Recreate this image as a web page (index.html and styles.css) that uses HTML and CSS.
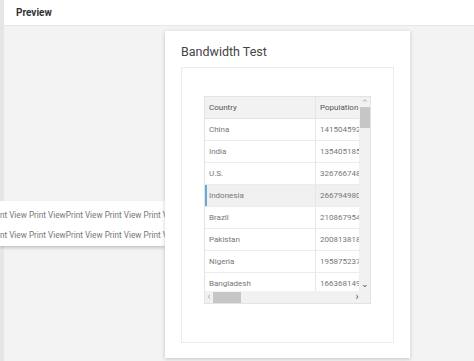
FILE: index.html
```html
<!DOCTYPE html>
<html lang="en">
<head>
    <meta charset="UTF-8">
    <meta name="viewport" content="width=device-width, initial-scale=1.0">
    <title>Preview</title>
    <link rel="stylesheet" href="styles.css">
</head>
<body>
    <div class="page">
        <div class="header">Preview</div>
        <div class="stage">
            <div class="print-strip">
                <div class="print-line">Print View Print ViewPrint View Print View Print View</div>
                <div class="print-line">Print View Print ViewPrint View Print View Print View</div>
            </div>
            <div class="card">
                <div class="card-title">Bandwidth Test</div>
                <div class="card-body">
                    <div class="grid">
                        <div class="grid-main">
                            <div class="grid-view">
                                <div class="row head">
                                    <div class="cell country">Country</div>
                                    <div class="cell pop">Population</div>
                                </div>
                                <div class="row"><div class="cell country">China</div><div class="cell pop">1415045928</div></div>
                                <div class="row"><div class="cell country">India</div><div class="cell pop">1354051854</div></div>
                                <div class="row"><div class="cell country">U.S.</div><div class="cell pop">326766748</div></div>
                                <div class="row selected"><div class="cell country">Indonesia</div><div class="cell pop">266794980</div></div>
                                <div class="row"><div class="cell country">Brazil</div><div class="cell pop">210867954</div></div>
                                <div class="row"><div class="cell country">Pakistan</div><div class="cell pop">200813818</div></div>
                                <div class="row"><div class="cell country">Nigeria</div><div class="cell pop">195875237</div></div>
                                <div class="row"><div class="cell country">Bangladesh</div><div class="cell pop">166368149</div></div>
                            </div>
                            <div class="vscroll">
                                <span class="arrow">&#8963;</span>
                                <div class="vthumb"></div>
                                <span class="arrow down">&#8964;</span>
                            </div>
                        </div>
                        <div class="hscroll">
                            <span class="harrow">&#8249;</span>
                            <div class="hthumb"></div>
                            <span class="harrow right">&#8250;</span>
                        </div>
                    </div>
                </div>
            </div>
        </div>
    </div>
</body>
</html>
```

FILE: styles.css
```css
body {
    margin: 0;
    font-family: Roboto, "Liberation Sans", Arial, sans-serif;
    background-color: #f3f3f3;
    overflow: hidden;
}

.page {
    height: 361px;
    border-left: 4px solid #e6e6e6;
    box-sizing: border-box;
}

.header {
    height: 25px;
    background-color: #fff;
    border-bottom: 1px solid #e6e6e6;
    font-size: 10px;
    font-weight: bold;
    color: #333;
    line-height: 26px;
    padding-left: 12px;
}

.stage {
    position: relative;
    padding: 5px 0 0 161px;
}

.print-strip {
    position: absolute;
    left: -4px;
    top: 175px;
    width: 165px;
    height: 45px;
    background-color: #fff;
    box-shadow: 0 2px 3px rgba(0, 0, 0, 0.18);
    overflow: hidden;
    padding-top: 7px;
    box-sizing: border-box;
}

.print-line {
    font-size: 8.2px;
    color: #777;
    white-space: nowrap;
    margin-left: -10px;
    height: 20px;
    line-height: 14px;
}

.card {
    position: relative;
    width: 245px;
    height: 327px;
    background-color: #fff;
    box-shadow: 0 1px 4px rgba(0, 0, 0, 0.2);
    padding: 12px 16px 0 16px;
    box-sizing: border-box;
}

.card-title {
    font-size: 12.5px;
    color: #444;
    height: 24px;
    line-height: 17px;
}

.card-body {
    width: 213px;
    height: 276px;
    border: 1px solid #ebebeb;
    box-sizing: border-box;
    padding: 28px 0 0 22px;
}

.grid {
    width: 167px;
    border: 1px solid #e3e3e3;
    box-sizing: border-box;
    font-size: 8px;
    color: #777;
}

.grid-main {
    display: flex;
    height: 194px;
    overflow: hidden;
}

.grid-view {
    width: 155px;
    overflow: hidden;
}

.row {
    display: flex;
    height: 22px;
    border-bottom: 1px solid #ececec;
    box-sizing: border-box;
    background-color: #fff;
}

.row.head {
    background-color: #f2f2f2;
    color: #555;
    height: 22px;
    border-bottom: 1px solid #e3e3e3;
}

.row.selected {
    background-color: #f0f0f0;
    box-shadow: inset 2px 0 0 #6aa9d8;
}

.cell {
    line-height: 21px;
    white-space: nowrap;
    overflow: hidden;
    box-sizing: border-box;
    padding-left: 4px;
}

.cell.country {
    width: 111px;
    border-right: 1px solid #e6e6e6;
    flex: none;
}

.cell.pop {
    width: 44px;
    flex: none;
    padding-left: 4px;
}

.vscroll {
    width: 11px;
    background-color: #f1f1f1;
    display: flex;
    flex-direction: column;
    align-items: center;
    position: relative;
}

.vscroll .arrow {
    font-size: 9px;
    color: #aaa;
    height: 10px;
    line-height: 12px;
}

.vscroll .arrow.down {
    position: absolute;
    bottom: 0;
    color: #555;
    line-height: 6px;
}

.vthumb {
    width: 10px;
    height: 21px;
    background-color: #c6c6c6;
}

.hscroll {
    display: flex;
    align-items: center;
    height: 12px;
    background-color: #f1f1f1;
    position: relative;
}

.harrow {
    font-size: 10px;
    color: #aaa;
    width: 8px;
    text-align: center;
    line-height: 12px;
}

.harrow.right {
    position: absolute;
    left: 148px;
    color: #555;
}

.hthumb {
    width: 28px;
    height: 11px;
    background-color: #c6c6c6;
}
```
